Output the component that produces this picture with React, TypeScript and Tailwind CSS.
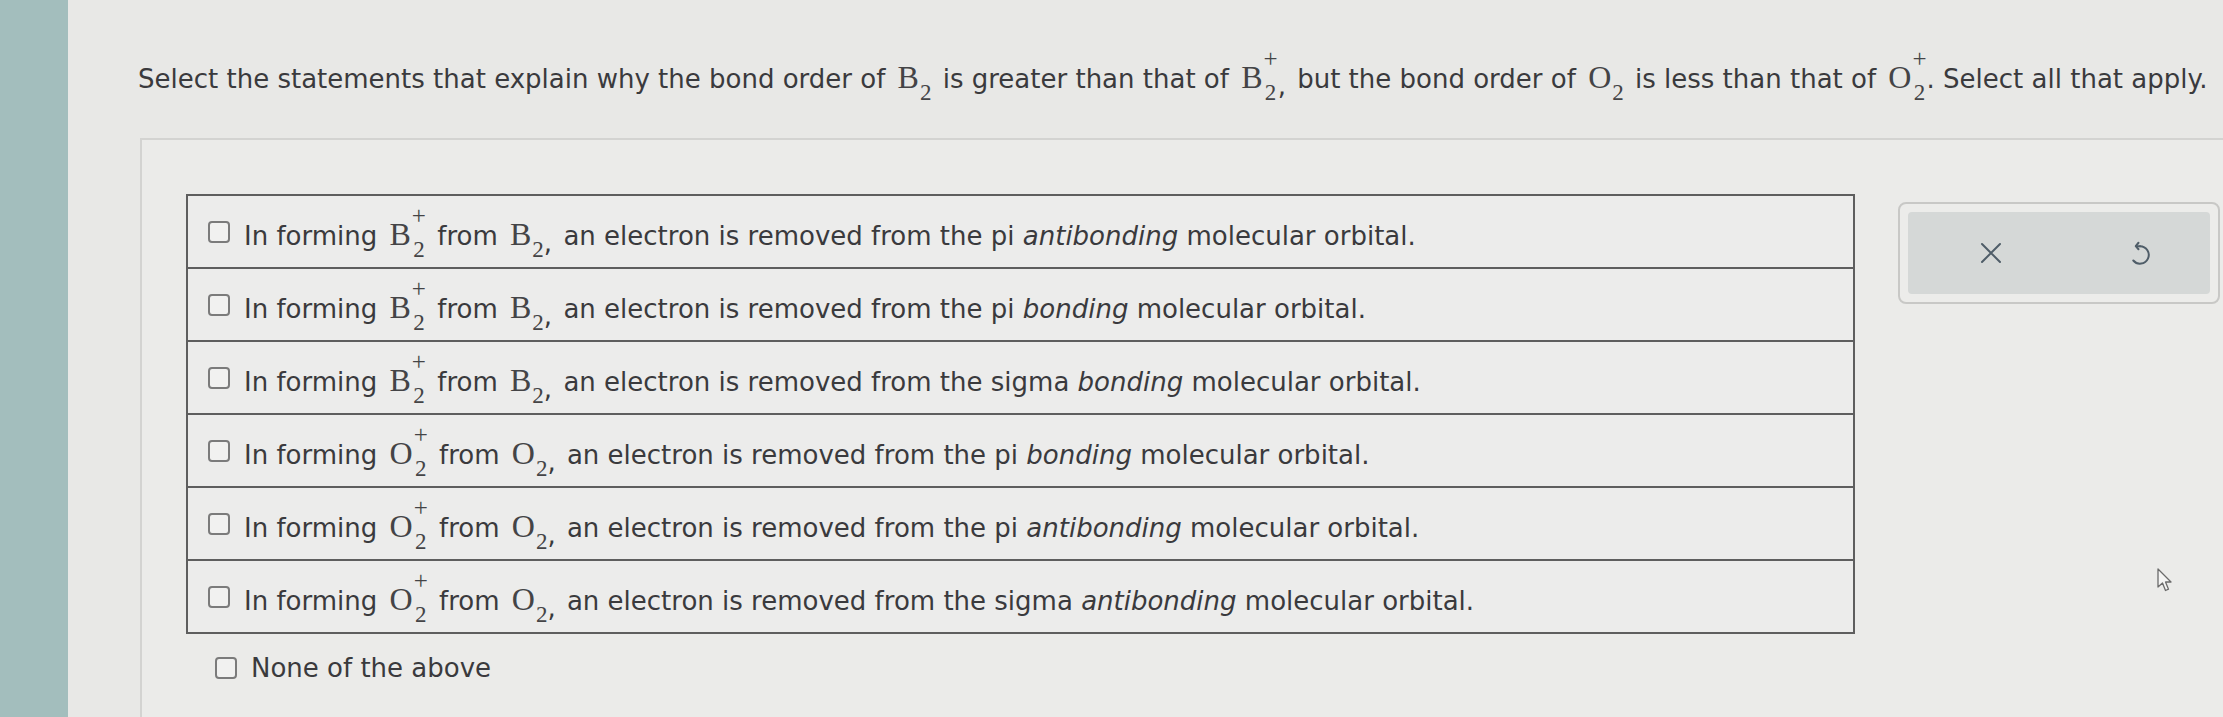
import React from "react";

const serif = "font-['Liberation_Serif',serif]";

function Chem({ b, plus, gap }: { b: string; plus?: boolean; gap?: boolean }) {
  return (
    <span className={`whitespace-nowrap ml-[4px] ${gap ? "mr-[3px]" : ""}`}>
      <span className={`${serif} text-[32px] text-[#444446]`}>{b}</span>
      {plus ? (
        <span className={`${serif} inline-block align-[-12px] text-center text-[#444446] ml-[1px]`}>
          <span className="block text-[25px] leading-[25px] mb-[10px]">+</span>
          <span className="block text-[23px] leading-[23px]">2</span>
        </span>
      ) : (
        <span className={`${serif} inline-block align-[-12px] text-[23px] leading-[23px] text-[#444446] ml-[1px]`}>2</span>
      )}
    </span>
  );
}

function Comma() {
  return <span className="inline-block align-[-7px] mr-[3px]">,</span>;
}

function Box() {
  return <span className="inline-block w-[22px] h-[22px] shrink-0 rounded-[4px] border-2 border-[#7b7b7b] bg-[#f1f1f0]" />;
}

type Row = { el: "B" | "O"; orb: string; kind: string };
const rows: Row[] = [
  { el: "B", orb: "pi", kind: "antibonding" },
  { el: "B", orb: "pi", kind: "bonding" },
  { el: "B", orb: "sigma", kind: "bonding" },
  { el: "O", orb: "pi", kind: "bonding" },
  { el: "O", orb: "pi", kind: "antibonding" },
  { el: "O", orb: "sigma", kind: "antibonding" },
];

export default function App() {
  return (
    <div className="relative flex w-[2223px] h-[717px] overflow-hidden bg-[#e8e8e6] font-['DejaVu_Sans',sans-serif] text-[#3a3a3d]">
      <div className="w-[68px] shrink-0 bg-[#a3bebd]" />
      <div className="flex-1 flex flex-col pl-[70px]">
        <div className="h-[138px] shrink-0 pt-[46px]">
          <p className="text-[26px] leading-[34px] whitespace-nowrap">
            Select the statements that explain why the bond order of <Chem b="B" gap /> is greater than that of{" "}
            <Chem b="B" plus />
            <Comma /> but the bond order of <Chem b="O" gap /> is less than that of <Chem b="O" plus />. Select all that apply.
          </p>
        </div>
        <div className="flex-1 ml-[2px] flex border-l-2 border-t-2 border-[#d3d3d1] bg-[#ebebe9]">
          <div className="pl-[44px] pt-[54px] flex flex-col">
            <div className="w-[1669px] border-t-2 border-x-2 border-[#5e5e5e] bg-[#ececeb]">
              {rows.map((r, i) => (
                <div key={i} className="h-[73px] border-b-2 border-[#5e5e5e] flex items-center pl-[20px]">
                  <Box />
                  <span className="ml-[14px] text-[26px] leading-[34px] whitespace-nowrap">
                    In forming <Chem b={r.el} plus gap /> from <Chem b={r.el} />
                    <Comma /> an electron is removed from the {r.orb} <span className="italic">{r.kind}</span> molecular orbital.
                  </span>
                </div>
              ))}
            </div>
            <div className="mt-[16px] h-[36px] flex items-center pl-[29px]">
              <Box />
              <span className="ml-[14px] text-[26px] leading-[34px]">None of the above</span>
            </div>
          </div>
          <div className="ml-[43px] mt-[62px]">
            <div className="w-[322px] h-[102px] rounded-[8px] border-2 border-[#c8c8c6] bg-[#ececea] p-[8px]">
              <div className="h-full rounded-[4px] bg-[#d5d8d7] flex">
                <div className="flex-1 flex items-center justify-center pl-[12px]">
                  <svg width="22" height="22" viewBox="0 0 22 22" fill="none" stroke="#4f5d68" strokeWidth="2" strokeLinecap="round">
                    <path d="M2 2 L20 20 M20 2 L2 20" />
                  </svg>
                </div>
                <div className="flex-1 flex items-center justify-center pl-[8px]">
                  <svg width="30" height="30" viewBox="0 0 24 24" fill="none" stroke="#4f5d68" strokeWidth="1.6" strokeLinecap="round" strokeLinejoin="round">
                    <path d="M12 6.5 A7 7 0 1 1 6.64 18" />
                    <path d="M12 6.5 H9.2" />
                    <path d="M10.8 3.8 L8.6 6.5 L10.8 9" />
                  </svg>
                </div>
              </div>
            </div>
          </div>
        </div>
      </div>
      <svg className="absolute left-[2157px] top-[568px]" width="16" height="26" viewBox="0 0 16 26" fill="#f4f4f3" stroke="#6b6b6b" strokeWidth="1.3" strokeLinejoin="round">
        <path d="M1 1 L1 19 L5.5 15 L8.5 22.5 L11.5 21.2 L8.5 14 L14 14 Z" />
      </svg>
    </div>
  );
}
